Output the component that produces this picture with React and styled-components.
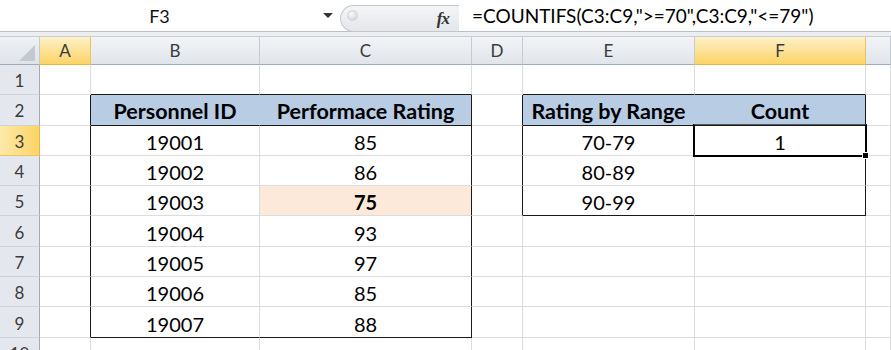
import React from "react";
import styled, { createGlobalStyle } from "styled-components";

const Global = createGlobalStyle`
  html, body { margin: 0; padding: 0; background: #fff; }
  body { font-family: Lato, "Noto Sans", sans-serif; }
`;

const Page = styled.div`
  width: 891px;
  height: 350px;
  overflow: hidden;
  background: #fff;
  color: #000;
`;

const FormulaBar = styled.div`
  display: flex;
  align-items: center;
  height: 31px;
  border-bottom: 1px solid #b9c0c9;
  background: #fff;
`;

const NameBox = styled.div`
  width: 315px;
  text-align: center;
  font-size: 18px;
  color: #111;
  padding-left: 2px;
`;

const DropArrow = styled.div`
  width: 0;
  height: 0;
  border-left: 5px solid transparent;
  border-right: 5px solid transparent;
  border-top: 5px solid #333;
  margin-left: 6px;
  margin-right: 7px;
`;

const Pill = styled.div`
  position: relative;
  width: 119px;
  height: 27px;
  align-self: flex-end;
  box-sizing: border-box;
  border: 1px solid #c3c8ce;
  border-right: none;
  border-radius: 14px 0 0 14px;
  background: linear-gradient(#f4f5f7, #e3e6ea);
  display: flex;
  align-items: center;
  justify-content: space-between;
  padding: 0 10px 0 6px;
  margin-bottom: -1px;
`;

const Knob = styled.span`
  width: 9px;
  height: 9px;
  border-radius: 50%;
  background: radial-gradient(circle at 40% 35%, #fafafa, #c9ccd0);
  border: 1px solid #d2d5d9;
  margin-top: -6px;
`;

const Fx = styled.span`
  font-family: "Liberation Serif", serif;
  font-style: italic;
  font-weight: bold;
  font-size: 17px;
  color: #333;
  letter-spacing: -1px;
`;

const FormulaText = styled.div`
  flex: 1;
  padding-left: 13px;
  font-size: 19px;
  color: #000;
  white-space: nowrap;
`;

const Band = styled.div`
  height: 4px;
  background: #eceef1;
  border-bottom: 1px solid #c9ced5;
`;

const columns = "40px 51px 169px 212px 51px 172px 171px 1fr";

const HeadRow = styled.div`
  display: grid;
  grid-template-columns: ${columns};
  height: 28px;
`;

const Corner = styled.div`
  position: relative;
  box-sizing: border-box;
  background: linear-gradient(#eef1f5, #dfe4ea);
  border-right: 1px solid #c5cbd3;
  border-bottom: 1px solid #9eabbb;
`;

const CornerMark = styled.svg`
  position: absolute;
  right: 4px;
  bottom: 3px;
`;

const ColHead = styled.div`
  box-sizing: border-box;
  display: flex;
  align-items: center;
  justify-content: center;
  font-size: 17px;
  color: #3b3b3b;
  background: ${(p) =>
    p.$sel
      ? "linear-gradient(#fdf1c8, #fcd466)"
      : "linear-gradient(#f2f4f7, #e0e5eb)"};
  border-right: 1px solid ${(p) => (p.$sel ? "#f1c256" : "#c5cbd3")};
  border-bottom: 1px solid ${(p) => (p.$sel ? "#e9b443" : "#9eabbb")};
`;

const Sheet = styled.div`
  display: grid;
  grid-template-columns: ${columns};
  grid-auto-rows: 30.3px;
`;

const RowHead = styled.div`
  box-sizing: border-box;
  display: flex;
  align-items: center;
  justify-content: center;
  font-size: 17px;
  color: #3b3b3b;
  padding-top: 2px;
  background: ${(p) =>
    p.$sel ? "linear-gradient(90deg, #fde9a9, #fcd466)" : "#e4e8ee"};
  border-right: 1px solid ${(p) => (p.$sel ? "#e9b443" : "#9eabbb")};
  border-bottom: 1px solid ${(p) => (p.$sel ? "#f1c256" : "#cdd3db")};
`;

const Cell = styled.div`
  position: relative;
  box-sizing: border-box;
  display: flex;
  align-items: center;
  justify-content: center;
  padding-top: 3px;
  font-size: ${(p) => (p.$head ? "21.5px" : "20px")};
  font-weight: ${(p) => (p.$bold ? 700 : 400)};
  color: #000;
  white-space: nowrap;
  background: ${(p) => p.$bg || "#fff"};
  border-right: 1px solid ${(p) => p.$rc || "#dadcdd"};
  border-bottom: 1px solid ${(p) => p.$bc || "#dadcdd"};
`;

const Selection = styled.div`
  position: absolute;
  z-index: 2;
  left: -2px;
  top: -2px;
  right: -2px;
  bottom: -2px;
  border: 2px solid #000;
  border-top-width: 1px;
  border-top-color: #555;
  pointer-events: none;
`;

const FillHandle = styled.div`
  position: absolute;
  right: -4px;
  bottom: -4px;
  width: 5px;
  height: 5px;
  background: #000;
  border: 1px solid #fff;
`;

const HEADER_BG = "#b8cce4";
const HILITE_BG = "#fde9d9";

const data = {
  2: ["", "Personnel ID", "Performace Rating", "", "Rating by Range", "Count", ""],
  3: ["", "19001", "85", "", "70-79", "1", ""],
  4: ["", "19002", "86", "", "80-89", "", ""],
  5: ["", "19003", "75", "", "90-99", "", ""],
  6: ["", "19004", "93", "", "", "", ""],
  7: ["", "19005", "97", "", "", "", ""],
  8: ["", "19006", "85", "", "", "", ""],
  9: ["", "19007", "88", "", "", "", ""],
  10: ["", "", "", "", "", "", ""],
};

const inT1 = (r, c) => r >= 2 && r <= 9 && (c === 1 || c === 2);
const inT2 = (r, c) => r >= 2 && r <= 5 && (c === 4 || c === 5);

function cellStyle(r, c) {
  const s = {};
  const t1 = inT1(r, c);
  const t2 = inT2(r, c);
  if (r === 2 && (t1 || t2)) {
    s.$bg = HEADER_BG;
    s.$bold = true;
    s.$head = true;
    s.$bc = "#1a1a1a";
    if (c === 1 || c === 4) s.$rc = HEADER_BG;
  }
  if (r === 5 && c === 2) {
    s.$bg = HILITE_BG;
    s.$bold = true;
  }
  if ((t1 && c === 2) || (t2 && c === 5)) s.$rc = "#1a1a1a";
  if ((c === 0 && r >= 2 && r <= 9) || (c === 3 && r >= 2 && r <= 5)) s.$rc = "#1a1a1a";
  if (r === 1 && [1, 2, 4, 5].includes(c)) s.$bc = "#1a1a1a";
  if (r === 9 && t1) s.$bc = "#1a1a1a";
  if (r === 5 && t2) s.$bc = "#1a1a1a";
  return s;
}

const colLetters = ["A", "B", "C", "D", "E", "F", ""];

export default function App() {
  const rows = [];
  for (let r = 1; r <= 10; r++) {
    const vals = data[r] || ["", "", "", "", "", "", ""];
    rows.push(
      <RowHead key={`h${r}`} $sel={r === 3}>
        {r}
      </RowHead>
    );
    vals.forEach((v, c) => {
      const sel = r === 3 && c === 5;
      rows.push(
        <Cell key={`${r}-${c}`} {...cellStyle(r, c)}>
          {v}
          {sel && (
            <Selection>
              <FillHandle />
            </Selection>
          )}
        </Cell>
      );
    });
  }

  return (
    <Page>
      <Global />
      <FormulaBar>
        <NameBox>F3</NameBox>
        <DropArrow />
        <Pill>
          <Knob />
          <Fx>fx</Fx>
        </Pill>
        <FormulaText>=COUNTIFS(C3:C9,"&gt;=70",C3:C9,"&lt;=79")</FormulaText>
      </FormulaBar>
      <Band />
      <HeadRow>
        <Corner>
          <CornerMark width="16" height="16" viewBox="0 0 16 16">
            <polygon points="16,0 16,16 0,16" fill="#c3c9d1" />
          </CornerMark>
        </Corner>
        {colLetters.map((l, i) => (
          <ColHead key={i} $sel={l === "A" || l === "F"}>
            {l}
          </ColHead>
        ))}
      </HeadRow>
      <Sheet>{rows}</Sheet>
    </Page>
  );
}
